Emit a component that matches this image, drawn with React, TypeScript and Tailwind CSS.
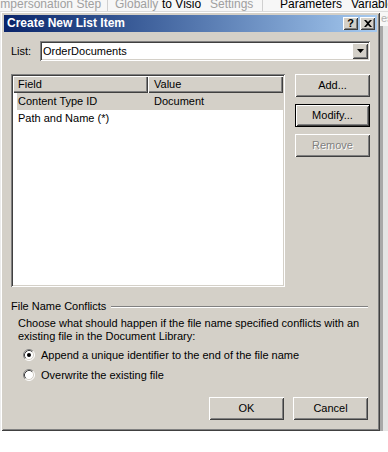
import React from "react";

const raised =
  "shadow-[inset_1px_1px_0_#ffffff,inset_-1px_-1px_0_#404040,inset_2px_2px_0_#d4d0c8,inset_-2px_-2px_0_#808080]";
const sunken =
  "shadow-[inset_1px_1px_0_#808080,inset_-1px_-1px_0_#ffffff,inset_2px_2px_0_#404040,inset_-2px_-2px_0_#d4d0c8]";
const defaultBtn =
  "shadow-[inset_0_0_0_1px_#000000,inset_2px_2px_0_#ffffff,inset_-2px_-2px_0_#404040,inset_3px_3px_0_#d4d0c8,inset_-3px_-3px_0_#808080]";

function Btn({ label, def, disabled }: { label: string; def?: boolean; disabled?: boolean }) {
  return (
    <div
      className={`flex h-[23px] w-[75px] items-center justify-center bg-[#d4d0c8] ${def ? defaultBtn : raised} ${
        disabled ? "text-[#808080] [text-shadow:1px_1px_0_#ffffff]" : "text-black"
      }`}
    >
      {label}
    </div>
  );
}

function Radio({ checked, label }: { checked?: boolean; label: string }) {
  return (
    <div className="flex h-[16px] items-center">
      <svg width="12" height="12" viewBox="0 0 12 12" className="ml-[5px] mr-[6px]">
        <circle cx="6" cy="6" r="5" fill="#ffffff" />
        <path d="M2.11 9.89 A5.5 5.5 0 0 1 9.89 2.11" fill="none" stroke="#808080" />
        <path d="M9.89 2.11 A5.5 5.5 0 0 1 2.11 9.89" fill="none" stroke="#ffffff" />
        <path d="M2.82 9.18 A4.5 4.5 0 0 1 9.18 2.82" fill="none" stroke="#404040" />
        <path d="M9.18 2.82 A4.5 4.5 0 0 1 2.82 9.18" fill="none" stroke="#d4d0c8" />
        {checked && <circle cx="6" cy="6" r="2" fill="#000000" />}
      </svg>
      <span>{label}</span>
    </div>
  );
}

export default function App() {
  return (
    <div className="h-[452px] w-[388px] overflow-hidden bg-white font-['Liberation_Sans',Arial,sans-serif] text-[11px] leading-[13px] text-black">
      {/* background app behind the dialog */}
      <div className="flex h-[12px] items-start overflow-hidden whitespace-nowrap border-b border-[#dcdcdc] bg-[#f7f7f7] text-[12px] leading-[12px]">
        <span className="-mt-[2px] ml-[-3px] w-[110px] shrink-0 text-[#a0a0a0]">Impersonation Step</span>
        <span className="h-full w-px shrink-0 bg-[#d0d0d0]" />
        <span className="-mt-[2px] ml-[7px] w-[47px] shrink-0 text-[#a0a0a0]">Globally</span>
        <span className="-mt-[2px] w-[48px] shrink-0">to Visio</span>
        <span className="-mt-[2px] w-[52px] shrink-0 text-[#a0a0a0]">Settings</span>
        <span className="h-full w-px shrink-0 bg-[#d0d0d0]" />
        <span className="-mt-[2px] ml-[17px] w-[71px] shrink-0">Parameters</span>
        <span className="-mt-[2px] shrink-0">Variables</span>
      </div>

      <div className="flex h-[419px]">
        <div className="w-[1px] bg-[#ececec]" />

        {/* dialog window */}
        <div className={`flex w-[379px] flex-col bg-[#d4d0c8] p-[3px] ${raised}`}>
          <div className="flex h-[17px] items-center bg-linear-to-r from-[#0a246a] to-[#a6caf0] pl-[3px]">
            <span className="flex-1 text-[12px] font-bold text-white">Create New List Item</span>
            <div className={`flex h-[13px] w-[15px] items-center justify-center bg-[#d4d0c8] ${raised}`}>
              <span className="text-[11px] font-bold leading-[11px]">?</span>
            </div>
            <div className={`ml-[2px] mr-[2px] flex h-[13px] w-[15px] items-center justify-center bg-[#d4d0c8] ${raised}`}>
              <svg width="8" height="7" viewBox="0 0 8 7">
                <path d="M0 0h2l2 2 2-2h2L5 3.5 8 7H6L4 5 2 7H0l3-3.5z" fill="#000000" />
              </svg>
            </div>
          </div>

          <div className="flex flex-col px-[7px]">
            {/* list selector */}
            <div className="mt-[9px] flex items-center">
              <span className="w-[29px]">List:</span>
              <div className={`flex h-[20px] w-[330px] items-center bg-white p-[2px] ${sunken}`}>
                <span className="flex-1 pl-[1px]">OrderDocuments</span>
                <div className={`flex h-[16px] w-[16px] items-center justify-center bg-[#d4d0c8] ${raised}`}>
                  <svg width="7" height="4" viewBox="0 0 7 4">
                    <path d="M0 0h7L3.5 4z" fill="#000000" />
                  </svg>
                </div>
              </div>
            </div>

            {/* field list + side buttons */}
            <div className="mt-[13px] flex">
              <div className={`h-[213px] w-[275px] bg-white p-[2px] ${sunken}`}>
                <div className="flex h-[17px] items-center bg-[#d4d0c8]">
                  <div className="flex h-full w-[135px] items-center pl-[5px] shadow-[inset_1px_1px_0_#ffffff,inset_-1px_-1px_0_#404040,inset_-2px_-2px_0_#808080]">
                    Field
                  </div>
                  <div className="flex h-full flex-1 items-center pl-[6px] shadow-[inset_1px_1px_0_#ffffff,inset_-1px_-1px_0_#404040,inset_-2px_-2px_0_#808080]">
                    Value
                  </div>
                </div>
                <div className="ml-[4px] flex h-[17px] items-center bg-[#d4d0c8]">
                  <span className="w-[137px] pl-[1px]">Content Type ID</span>
                  <span>Document</span>
                </div>
                <div className="ml-[4px] flex h-[17px] items-center">
                  <span className="w-[137px] pl-[1px]">Path and Name (*)</span>
                </div>
              </div>
              <div className="ml-[10px] flex flex-col gap-[7px]">
                <Btn label="Add..." />
                <Btn label="Modify..." def />
                <Btn label="Remove" disabled />
              </div>
            </div>

            {/* conflicts group */}
            <div className="mt-[13px] flex items-center">
              <span>File Name Conflicts</span>
              <div className="ml-[5px] mr-[2px] flex-1 border-t border-b border-t-[#808080] border-b-white" />
            </div>
            <p className="mt-[4px] pl-[7px]">
              Choose what should happen if the file name specified conflicts with an existing file in the Document
              Library:
            </p>
            <div className="mt-[4px] flex flex-col gap-[4px] pl-[7px]">
              <Radio checked label="Append a unique identifier to the end of the file name" />
              <Radio label="Overwrite the existing file" />
            </div>

            <div className="mt-[14px] flex justify-end gap-[9px] pr-[2px]">
              <Btn label="OK" />
              <Btn label="Cancel" />
            </div>
          </div>
        </div>

        {/* background to the right */}
        <div className="flex w-[8px] flex-col">
          <div className="h-[14px] overflow-hidden whitespace-nowrap bg-[#f7f7f7] pl-[1px] text-[#b0b0b0]">es</div>
          <div className="flex-1 border-l-[3px] border-[#a8a8a8] bg-[#e4e4e4]" />
        </div>
      </div>
    </div>
  );
}
